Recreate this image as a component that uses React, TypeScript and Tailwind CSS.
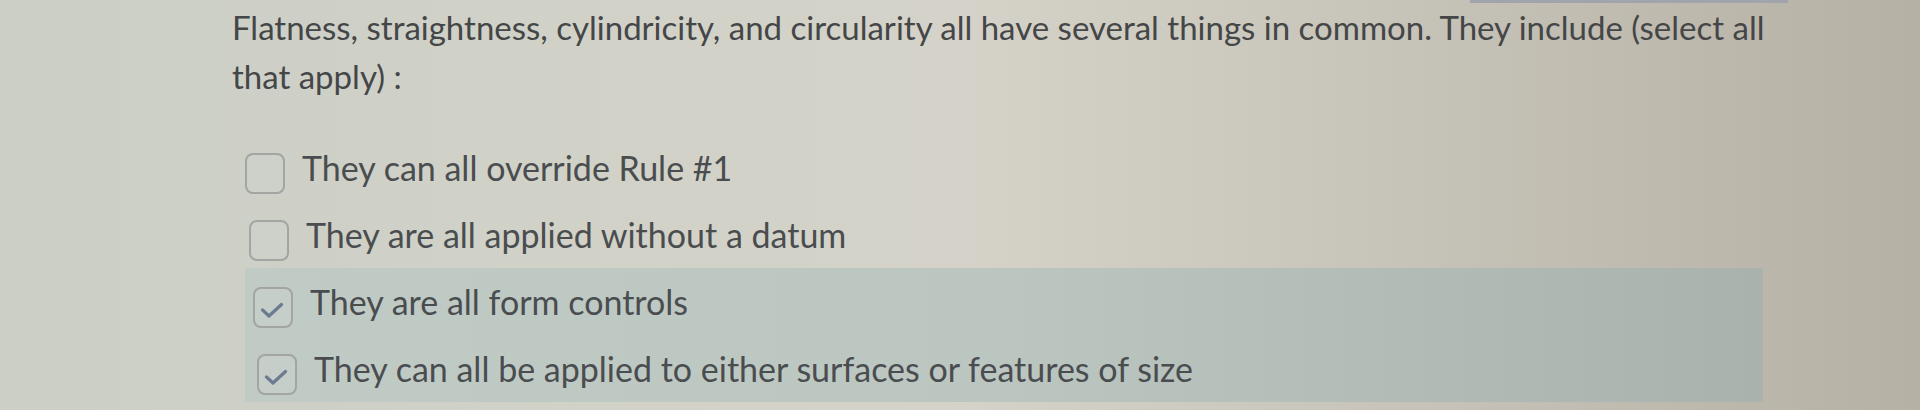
import React from 'react';

type Option = { label: string; checked: boolean; shift: string };

const options: Option[] = [
  { label: 'They can all override Rule #1', checked: false, shift: 'pl-0' },
  { label: 'They are all applied without a datum', checked: false, shift: 'pl-[4px]' },
  { label: 'They are all form controls', checked: true, shift: 'pl-[8px]' },
  { label: 'They can all be applied to either surfaces or features of size', checked: true, shift: 'pl-[12px]' },
];

const Checkbox: React.FC<{ checked: boolean }> = ({ checked }) => (
  <div className="mt-[12px] flex h-[41px] w-[40px] shrink-0 items-center justify-center rounded-[8px] border-2 border-[#a2a5a2] bg-[#cdd2cc]/40">
    {checked && (
      <svg width="24" height="16" viewBox="0 0 24 16" className="mt-[5px] -ml-[2px]">
        <path d="M2.5 8 L9 14 L21.5 2.5" fill="none" stroke="#6c7b90" strokeWidth="3.2" strokeLinecap="round" strokeLinejoin="round" />
      </svg>
    )}
  </div>
);

const OptionRow: React.FC<{ option: Option }> = ({ option }) => (
  <div className={`flex h-[67px] items-center gap-[17px] ${option.shift}`}>
    <Checkbox checked={option.checked} />
    <span className="text-[34px] leading-[40px] text-[#4a4d4f]">{option.label}</span>
  </div>
);

export default function App() {
  const unselected = options.filter((o) => !o.checked);
  const selected = options.filter((o) => o.checked);

  return (
    <div className="h-[410px] w-[1920px] overflow-hidden bg-gradient-to-r from-[#cbcfc6] via-[#d5d3c9] to-[#b6b1a5] font-['Lato',_'Liberation_Sans',_sans-serif]">
      <div className="ml-[1470px] h-[3px] w-[318px] bg-[#a2a4ad]" />
      <p className="ml-[232px] w-[1556px] text-[33px] leading-[49px] text-[#444647]">
        Flatness, straightness, cylindricity, and circularity all have several things in common. They include (select all that apply) :
      </p>

      <div className="ml-[245px] mt-[33px] w-[1518px]">
        {unselected.map((o) => (
          <OptionRow key={o.label} option={o} />
        ))}
        <div className="bg-gradient-to-r from-[#c1cbc6] via-[#bcc6c1] to-[#a9b2ad]">
          {selected.map((o) => (
            <OptionRow key={o.label} option={o} />
          ))}
        </div>
      </div>
    </div>
  );
}
